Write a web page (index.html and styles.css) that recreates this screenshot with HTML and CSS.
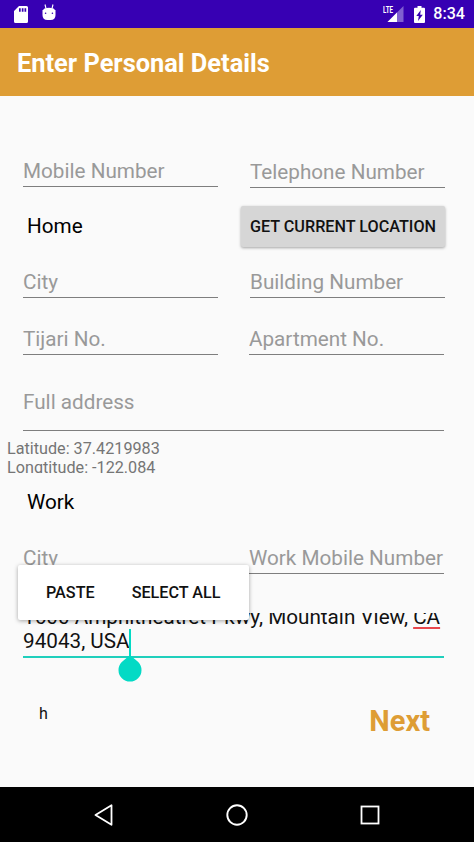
FILE: index.html
```html
<!DOCTYPE html>
<html lang="en">

<head>
  <meta charset="UTF-8">
  <meta name="viewport" content="width=device-width, initial-scale=1">
  <title>Enter Personal Details</title>
  <link rel="stylesheet" href="styles.css">
</head>

<body>
  <!-- Status bar -->
  <div class="status-bar">
    <svg class="sd-icon" width="14" height="17" viewBox="0 0 14 17">
      <path d="M5 0h7.500a1.500 1.500 0 0 1 1.500 1.500v14a1.500 1.500 0 0 1-1.500 1.500h-11a1.500 1.500 0 0 1-1.500-1.500V5z" fill="#fff"/>
      <path d="M5 2.200h1.700v3.600H5zM7.800 2.200h1.700v3.600H7.800zM10.500 2.200h1.700v3.600h-1.700z" fill="#3700b3"/>
    </svg>
    <svg class="droid-icon" width="14" height="17" viewBox="0 0 14 17">
      <path d="M3 .5l1 4M11 .5l-1 4" stroke="#fff" stroke-width="1.100"/>
      <path d="M2.500 4.500Q7 2.800 11.500 4.500L13.500 6.500V11Q13.500 16 8.500 16H5.500Q.5 16 .5 11V6.500z" fill="#fff"/>
      <circle cx="3.600" cy="9.200" r=".8" fill="#3700b3"/>
      <circle cx="10.400" cy="9.200" r=".8" fill="#3700b3"/>
    </svg>
    <div class="signal">
      <svg width="21" height="18" viewBox="0 0 21 18">
        <path d="M20.500 1v16h-16z" fill="#8060d0"/>
        <path d="M14 7.500V17H4.500z" fill="#fff"/>
      </svg>
      <span class="lte">LTE</span>
    </div>
    <svg class="battery-icon" width="11" height="17" viewBox="0 0 11 17">
      <path d="M3.500 0h4v1.800H10a1 1 0 0 1 1 1V16a1 1 0 0 1-1 1H1a1 1 0 0 1-1-1V2.800a1 1 0 0 1 1-1h2.500z" fill="#fff"/>
      <path d="M6.800 4L2.300 10h2.500L4 15l4.800-6.300H6.200z" fill="#3700b3"/>
    </svg>
    <span class="clock">8:34</span>
  </div>

  <header class="app-bar">
    <h1>Enter Personal Details</h1>
  </header>

  <!-- Details form -->
  <form class="details">
    <div class="row phones">
      <input type="text" class="mobile" placeholder="Mobile Number">
      <input type="text" class="telephone" placeholder="Telephone Number">
    </div>
    <div class="row home-row">
      <h2>Home</h2>
      <button type="button" class="location">GET CURRENT LOCATION</button>
    </div>
    <div class="row city-row">
      <input type="text" class="city" placeholder="City">
      <input type="text" class="building" placeholder="Building Number">
    </div>
    <div class="row tijari-row">
      <input type="text" class="tijari" placeholder="Tijari No.">
      <input type="text" class="apartment" placeholder="Apartment No.">
    </div>
    <div class="row">
      <input type="text" class="full-address" placeholder="Full address">
    </div>
    <div class="coords">
      <span class="lat">Latitude: 37.4219983</span><br>
      <span class="lng">Longtitude: -122.084</span>
    </div>
    <div class="row work-row">
      <h2>Work</h2>
    </div>
    <div class="row work-fields">
      <input type="text" class="work-city" placeholder="City">
      <input type="text" class="work-mobile" placeholder="Work Mobile Number">
      <!-- Text selection popup -->
      <div class="popup">
        <span class="paste">PASTE</span>
        <span class="select-all">SELECT ALL</span>
      </div>
    </div>
    <div class="work-address">
      <div class="address-text">
        <div>1600 Amphitheatret Pkwy, Mountain View, <span class="typo">CA</span></div>
        <div>94043, USA<span class="cursor"><svg class="handle" width="24" height="27" viewBox="0 0 24 27"><path d="M12 0L20.200 7A11.500 11.500 0 1 1 3.800 7z" fill="#03dac5"/></svg></span></div>
      </div>
    </div>
    <div class="row bottom-row">
      <span class="note">h</span>
      <a class="next">Next</a>
    </div>
  </form>

  <!-- Navigation bar -->
  <div class="nav-bar">
    <svg width="20" height="22" viewBox="0 0 20 22"><path d="M18.500 1.200v19.600L2.500 11z" fill="none" stroke="#fff" stroke-width="1.800" stroke-linejoin="round"/></svg>
    <svg width="22" height="22" viewBox="0 0 22 22"><circle cx="11" cy="11" r="9.700" fill="none" stroke="#fff" stroke-width="1.900"/></svg>
    <svg width="20" height="20" viewBox="0 0 20 20"><rect x="1.500" y="1.500" width="17" height="17" fill="none" stroke="#fff" stroke-width="1.800"/></svg>
  </div>
</body>

</html>
```
FILE: styles.css
```css
* {
  box-sizing: border-box;
}

body {
  margin: 0;
  height: 842px;
  display: flex;
  flex-direction: column;
  overflow: hidden;
  background: #fafafa;
  font-family: Roboto, "Liberation Sans", sans-serif;
}

.status-bar {
  height: 28px;
  flex: none;
  display: flex;
  align-items: center;
  padding: 0 9px 0 14px;
  background: #3700b3;
  color: #fff;
}

.droid-icon {
  margin-left: 14px;
  margin-top: -3px;
}

.signal {
  position: relative;
  height: 18px;
  margin-left: auto;
}

.lte {
  position: absolute;
  left: 0;
  top: 0;
  font-size: 9.500px;
  line-height: 9px;
  font-weight: 700;
  transform: scaleX(0.650);
  transform-origin: left;
}

.signal svg {
  display: block;
}

.battery-icon {
  margin-left: 10px;
  margin-right: 8px;
}

.clock {
  font-size: 16.100px;
  line-height: 30px;
  font-weight: 500;
}

.app-bar {
  height: 68px;
  flex: none;
  padding-left: 17px;
  background: #de9d35;
}

h1 {
  margin: 0;
  font-size: 25.400px;
  line-height: 71px;
  font-weight: 700;
  color: #fff;
}

.details {
  flex: 1;
  padding: 60px 30px 0 23px;
}

.row {
  display: flex;
  justify-content: space-between;
}

input {
  width: 195px;
  height: 31px;
  padding: 0;
  border: none;
  border-bottom: 1px solid #7e7e7e;
  background: none;
  font-family: inherit;
  font-size: 20.700px;
  color: #111;
}

input::placeholder {
  color: #999;
  opacity: 1;
}

h2 {
  margin: 0 0 0 4px;
  font-size: 20.700px;
  font-weight: 400;
  color: #000;
}

.telephone {
  margin-top: 1px;
}

.telephone,
.building {
  margin-right: -1px;
}

.home-row {
  height: 79px;
  padding-top: 18px;
}

.home-row h2 {
  line-height: 41px;
}

.location {
  width: 204px;
  height: 41px;
  margin-right: -1px;
  padding: 0;
  border: none;
  border-radius: 2px;
  background: #d6d6d6;
  box-shadow: 0 1px 3px rgba(0, 0, 0, 0.350);
  font-family: inherit;
  font-size: 16.200px;
  font-weight: 500;
  color: #111;
}

.tijari-row {
  margin-top: 26px;
}

.full-address {
  width: 100%;
  height: 58px;
  margin-top: 18px;
}

/* second line is cut off by the view height */
.coords {
  height: 34px;
  margin: 8px 0 0 -16px;
  overflow: hidden;
  font-size: 16.200px;
  line-height: 19px;
  color: #757575;
}

.work-row {
  height: 70px;
  padding-top: 8px;
}

.work-row h2 {
  line-height: 42px;
}

.work-fields {
  position: relative;
}

.popup {
  position: absolute;
  z-index: 1;
  left: -5px;
  top: 22px;
  width: 231px;
  height: 55px;
  display: flex;
  align-items: center;
  padding-left: 28px;
  gap: 37px;
  border-radius: 2px;
  background: #fff;
  box-shadow: 0 1px 4px rgba(0, 0, 0, 0.350);
  font-size: 16.200px;
  font-weight: 500;
  color: #111;
}

.work-address {
  height: 53px;
  margin-top: 31px;
  border-bottom: 2px solid #1fcfbc;
}

/* scrolled text, top of the first line is hidden */
.address-text {
  clip-path: inset(8px 0 -40px 0);
  font-size: 20.700px;
  line-height: 24px;
  white-space: nowrap;
  color: #111;
}

.typo {
  text-decoration: underline 2px #e8474c;
  text-decoration-skip-ink: none;
  text-underline-offset: 3px;
}

.cursor {
  position: relative;
  display: inline-block;
  width: 2px;
  height: 27px;
  margin-left: -1px;
  vertical-align: top;
  background: #03dac5;
}

.handle {
  position: absolute;
  left: -11px;
  top: 26px;
}

.bottom-row {
  padding: 45px 14px 0 16px;
}

.note {
  font-size: 16.100px;
  line-height: 21px;
  color: #111;
}

.next {
  font-size: 29px;
  line-height: 36px;
  font-weight: 700;
  color: #de9d35;
}

.nav-bar {
  height: 55px;
  flex: none;
  display: flex;
  align-items: center;
  justify-content: space-between;
  padding: 0 94px 0 93px;
  background: #000;
}
```
